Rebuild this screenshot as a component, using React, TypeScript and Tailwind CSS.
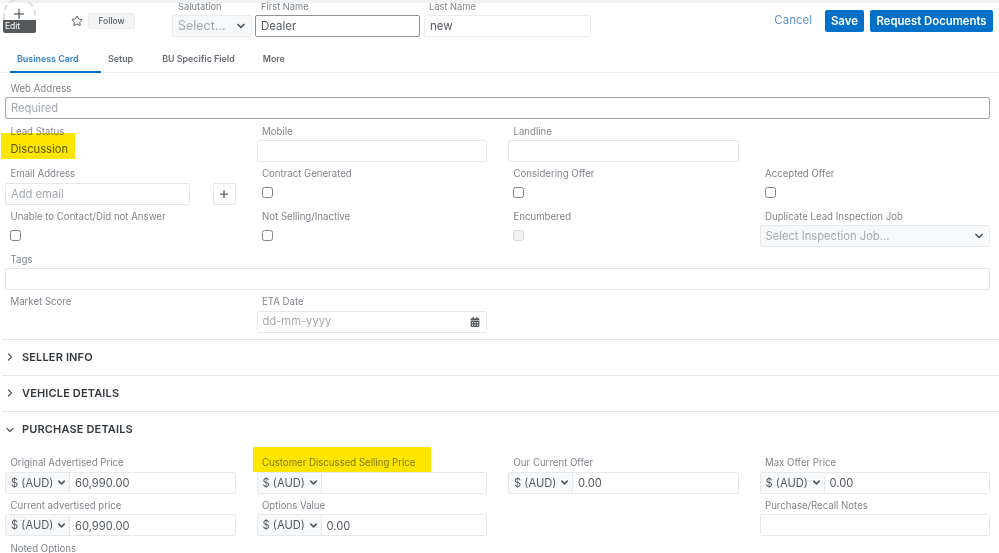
import { ChevronDown, ChevronRight, Plus, Star } from 'lucide-react';
import { FaCalendarAlt } from 'react-icons/fa';
import type { ReactNode } from 'react';

const labelCls = 'h-[20.67px] pt-[5.5px] pl-[5.5px] text-[9.65px] leading-[14px] text-[#7f8489] whitespace-nowrap';
const boxCls = 'h-[22px] rounded-[2px] border border-[#e6e9ec] bg-white flex items-center px-[5px] text-[11.2px] text-[#555b61] whitespace-nowrap';

function Label({ children }: { children?: ReactNode }) {
  return <div className={labelCls}>{children}</div>;
}

function TextField({ label, value, placeholder }: { label: string; value?: string; placeholder?: string }) {
  return (
    <div>
      <Label>{label}</Label>
      <div className={boxCls}>
        {value ?? <span className="text-[#a3a8ad]">{placeholder}</span>}
      </div>
    </div>
  );
}

function CheckField({ label, disabled }: { label: string; disabled?: boolean }) {
  return (
    <div>
      <Label>{label}</Label>
      <div className="h-[20px] pl-[5px] flex items-center">
        <div className={disabled ? 'w-[11px] h-[11px] rounded-[2.5px] border border-[#d5d7d9] bg-[#f1f2f3]' : 'w-[11px] h-[11px] rounded-[2.5px] border border-[#808488] bg-white'} />
      </div>
    </div>
  );
}

function MoneyField({ label, value }: { label: string; value?: string }) {
  return (
    <div>
      <Label>{label}</Label>
      <div className="h-[22px] rounded-[2px] border border-[#e6e9ec] bg-white flex items-center text-[11.2px] text-[#555b61] whitespace-nowrap">
        <div className="w-[64px] h-full shrink-0 bg-[#f7f8fa] border-r border-[#e6e9ec] flex items-center justify-between pl-[5px] pr-[2px]">
          <span className="pt-[1px]">$ (AUD)</span>
          <ChevronDown size={11} strokeWidth={3.5} className="text-[#555b61]" />
        </div>
        <div className="pl-[5px] pt-[2px]">{value}</div>
      </div>
    </div>
  );
}

function Section({ title, open }: { title: string; open?: boolean }) {
  return (
    <div className={open ? 'h-[36px] flex items-center pl-[2px]' : 'h-[36px] flex items-center pl-[2px] border-b border-[#e6e9ec]'}>
      {open ? (
        <ChevronDown size={12} strokeWidth={2.5} className="text-[#555b61]" />
      ) : (
        <ChevronRight size={12} strokeWidth={2.5} className="text-[#555b61]" />
      )}
      <span className="ml-[6px] text-[11px] font-semibold text-[#33383d] tracking-[0.15px]">{title}</span>
    </div>
  );
}

export default function App() {
  return (
    <div className="h-[553px] w-[999px] overflow-hidden bg-white font-['Inter',sans-serif]">
      <div className="h-[3px] bg-[#eff1f3]" />

      {/* Header */}
      <div className="h-[34px] flex items-start">
        <div className="relative ml-[3px] w-[33px] h-[30px] shrink-0 overflow-visible">
          <div className="absolute left-0 top-[-5px] w-[33px] h-[33px] rounded-full border-2 border-dashed border-[#dcdee0]" />
          <Plus size={16} strokeWidth={1.5} className="absolute left-[8px] top-[3px] text-[#33383d]" />
          <div className="absolute left-0 top-[17px] w-[33px] h-[13px] rounded-b-[2px] bg-[#55585b] text-[8.5px] leading-[13px] pl-[2px] text-white">Edit</div>
        </div>
        <Star size={12} strokeWidth={1.8} className="ml-[35px] mt-[12px] shrink-0 text-[#44494e]" />
        <div className="ml-[5px] mt-[10px] w-[47px] h-[16px] rounded-[2px] border border-[#e9ebee] bg-[#f3f4f6] flex items-center justify-center text-[8.5px] font-medium text-[#5a5f65]">Follow</div>

        <div className="ml-[37px] w-[80px]">
          <div className="h-[12px] pl-[6px] text-[9.3px] leading-[8px] text-[#7f8489]">Salutation</div>
          <div className="h-[22px] rounded-[2px] border border-[#e9ebee] bg-[#f7f8fa] flex items-center justify-between pl-[5px] pr-[4px] text-[12.5px] text-[#a3a8ad]">
            <span className="pt-[1px]">Select...</span>
            <ChevronDown size={12} strokeWidth={3.5} className="text-[#555b61]" />
          </div>
        </div>
        <div className="ml-[3px] w-[165px]">
          <div className="h-[12px] pl-[6px] text-[9.3px] leading-[8px] text-[#7f8489]">First Name</div>
          <div className="h-[22px] rounded-[2px] border border-[#8d9194] bg-white flex items-center pl-[5px] pt-[2px] text-[11.5px] text-[#555b61]">Dealer</div>
        </div>
        <div className="ml-[4px] w-[167px]">
          <div className="h-[12px] pl-[5px] text-[9.3px] leading-[8px] text-[#7f8489]">Last Name</div>
          <div className="h-[22px] rounded-[2px] border border-[#e9ebee] bg-white flex items-center pl-[5px] pt-[2px] text-[11.5px] text-[#555b61]">new</div>
        </div>

        <div className="ml-auto mr-[6px] mt-[7px] flex items-center">
          <span className="text-[11.5px] text-[#5f92cf] mr-[13px]">Cancel</span>
          <div className="h-[22px] w-[39px] pt-[1px] rounded-[2px] bg-[#0070c9] text-white text-[11.5px] font-semibold flex items-center justify-center">Save</div>
          <div className="ml-[6px] h-[22px] w-[123px] pt-[1px] rounded-[2px] bg-[#0070c9] text-white text-[11.3px] font-semibold flex items-center justify-center whitespace-nowrap">Request Documents</div>
        </div>
      </div>

      {/* Tabs */}
      <div className="h-[36px] border-b border-[#eceef0] pl-[10px] flex items-stretch text-[8.9px] font-semibold text-[#666b71]">
        <div className="w-[91px] pl-[7px] pt-[15px] -mb-px border-b-[2px] border-[#0070c9] text-[#2f7fc4]">Business Card</div>
        <div className="ml-[7px] pt-[15px]">Setup</div>
        <div className="ml-[29px] pt-[15px]">BU Specific Field</div>
        <div className="ml-[28px] pt-[15px]">More</div>
      </div>

      <div className="pl-[5px] pr-[9px]">
        <div className="h-[24px] pt-[3.33px]"><Label>Web Address</Label></div>
        <div className="h-[22px] rounded-[2px] border border-[#a3a7aa] flex items-center pl-[5px] text-[11.2px] text-[#a3a8ad]">Required</div>

        <div className="pt-[0.33px] grid grid-cols-4 gap-x-[21px] auto-rows-[42.67px]">
          <div className="relative">
            <Label>Lead Status</Label>
            <div className="pl-[5.5px] -mt-[1px] text-[11.2px] leading-[20px] text-[#555b61]">Discussion</div>
            <div className="absolute left-[-4px] top-[13.67px] w-[74px] h-[26px] bg-[#ffe600] mix-blend-multiply" />
          </div>
          <TextField label="Mobile" />
          <TextField label="Landline" />
          <div />

          <div>
            <Label>Email Address</Label>
            <div className="flex items-center">
              <div className={boxCls + ' w-[185px]'}><span className="pt-[1px] text-[#a3a8ad]">Add email</span></div>
              <div className="ml-[23px] w-[23px] h-[22px] rounded-[2px] border border-[#e6e9ec] flex items-center justify-center">
                <Plus size={12} strokeWidth={2.5} className="text-[#555b61]" />
              </div>
            </div>
          </div>
          <CheckField label="Contract Generated" />
          <CheckField label="Considering Offer" />
          <CheckField label="Accepted Offer" />

          <CheckField label="Unable to Contact/Did not Answer" />
          <CheckField label="Not Selling/Inactive" />
          <CheckField label="Encumbered" disabled />
          <div>
            <Label>Duplicate Lead Inspection Job</Label>
            <div className="h-[22px] rounded-[2px] border border-[#e6e9ec] bg-[#f7f8fa] flex items-center justify-between pl-[5px] pr-[4px] text-[11.2px] text-[#a3a8ad]">
              <span>Select Inspection Job...</span>
              <ChevronDown size={12} strokeWidth={3.5} className="text-[#555b61]" />
            </div>
          </div>

          <div className="col-span-4"><TextField label="Tags" /></div>

          <div><Label>Market Score</Label></div>
          <div>
            <Label>ETA Date</Label>
            <div className={boxCls + ' justify-between'}>
              <span className="text-[#a3a8ad]">dd-mm-yyyy</span>
              <FaCalendarAlt size={10} className="text-[#555b61] mr-[1px]" />
            </div>
          </div>
        </div>
      </div>

      {/* Sections */}
      <div className="mt-[6px] ml-[2px] border-t border-[#e6e9ec]">
        <Section title="SELLER INFO" />
        <Section title="VEHICLE DETAILS" />
        <Section title="PURCHASE DETAILS" open />
      </div>

      <div className="pl-[5px] pr-[9px] pt-[3.33px] grid grid-cols-4 gap-x-[21px] auto-rows-[42.67px]">
        <MoneyField label="Original Advertised Price" value="60,990.00" />
        <div className="relative">
          <MoneyField label="Customer Discussed Selling Price" />
          <div className="absolute left-[-4px] top-[-4.33px] w-[178px] h-[25px] bg-[#ffe600] mix-blend-multiply" />
        </div>
        <MoneyField label="Our Current Offer" value="0.00" />
        <MoneyField label="Max Offer Price" value="0.00" />

        <MoneyField label="Current advertised price" value="60,990.00" />
        <MoneyField label="Options Value" value="0.00" />
        <div />
        <TextField label="Purchase/Recall Notes" />

        <div className="col-span-4"><Label>Noted Options</Label></div>
      </div>
    </div>
  );
}
